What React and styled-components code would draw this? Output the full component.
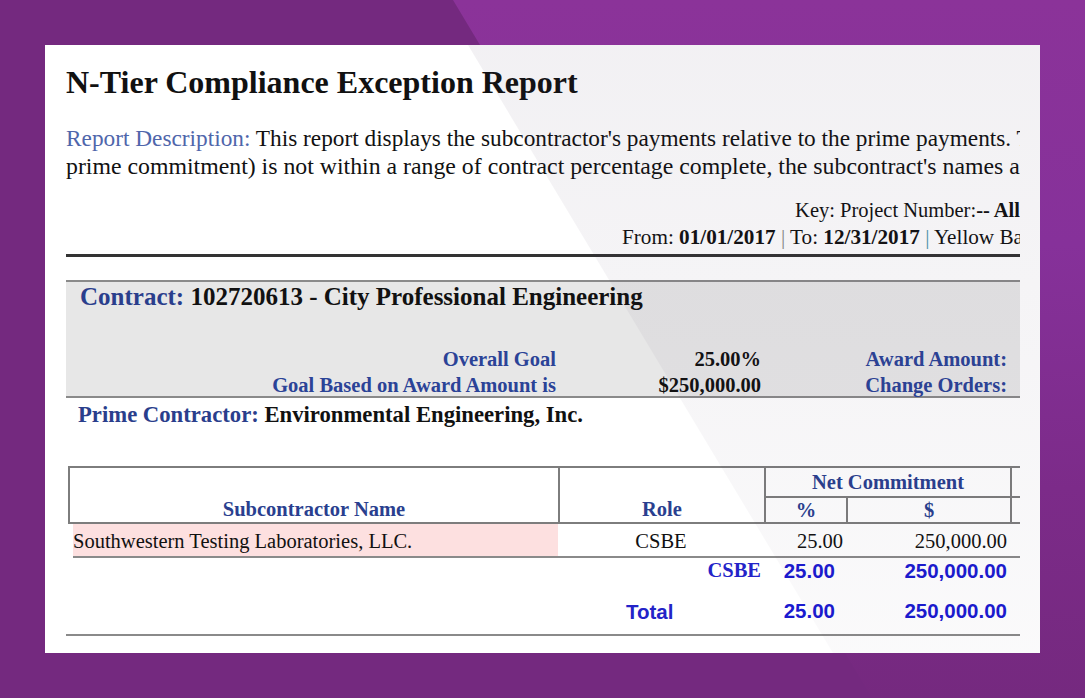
import React from 'react';
import styled, { createGlobalStyle } from 'styled-components';

const GlobalStyle = createGlobalStyle`
  html, body { margin: 0; padding: 0; }
  body { font-family: "Liberation Serif", "Times New Roman", serif; }
`;

function App() {
  return (
    <Page>
      <GlobalStyle />
      <Card>
        <Inner>
          <Title>N-Tier Compliance Exception Report</Title>

          <Description>
            <Line>
              <Label>Report Description:</Label> This report displays the subcontractor's payments relative to the prime payments. The subcontractor's payment percentage (relative to the
            </Line>
            <Line $wide>
              prime commitment) is not within a range of contract percentage complete, the subcontract's names are color coded below.
            </Line>
          </Description>

          <KeyBlock>
            <KeyLine>Key: Project Number:<b>-- All</b></KeyLine>
            <KeyLine $cut>
              From: <b>01/01/2017</b> <Sep>|</Sep> To: <b>12/31/2017</b> <Sep $teal>|</Sep> Yellow Ba<Rest>nd: 10%</Rest>
            </KeyLine>
          </KeyBlock>

          <ThickRule />

          <ContractBox>
            <ContractTitle>
              <Label $dark>Contract:</Label> 102720613 - City Professional Engineering
            </ContractTitle>
            <GoalGrid>
              <GoalLabel>Overall Goal</GoalLabel>
              <GoalValue>25.00%</GoalValue>
              <GoalLabel>Award Amount:</GoalLabel>
              <GoalLabel>Goal Based on Award Amount is</GoalLabel>
              <GoalValue>$250,000.00</GoalValue>
              <GoalLabel>Change Orders:</GoalLabel>
            </GoalGrid>
          </ContractBox>

          <Prime>
            <Label $dark>Prime Contractor:</Label> Environmental Engineering, Inc.
          </Prime>

          <HeadTable>
            <colgroup>
              <col style={{ width: 490 }} />
              <col style={{ width: 206 }} />
              <col style={{ width: 82 }} />
              <col style={{ width: 164 }} />
              <col style={{ width: 82 }} />
              <col style={{ width: 164 }} />
            </colgroup>
            <thead>
              <tr>
                <Th rowSpan={2} $bottom>Subcontractor Name</Th>
                <Th rowSpan={2} $bottom>Role</Th>
                <Th colSpan={2} $group>Net Commitment</Th>
                <Th colSpan={2} $group>Paid To Date</Th>
              </tr>
              <tr>
                <Th>%</Th>
                <Th>$</Th>
                <Th>%</Th>
                <Th>$</Th>
              </tr>
            </thead>
          </HeadTable>

          <BodyTable>
            <colgroup>
              <col style={{ width: 485 }} />
              <col style={{ width: 206 }} />
              <col style={{ width: 82 }} />
              <col style={{ width: 164 }} />
              <col style={{ width: 200 }} />
            </colgroup>
            <tbody>
              <DataRow>
                <NameCell>Southwestern Testing Laboratories, LLC.</NameCell>
                <Td $align="center">CSBE</Td>
                <Td $align="right">25.00</Td>
                <Td $align="right">250,000.00</Td>
                <Td />
              </DataRow>
              <SumRow>
                <td />
                <SumLabel $align="right">CSBE</SumLabel>
                <SumNum $pad={11}>25.00</SumNum>
                <SumNum $pad={3}>250,000.00</SumNum>
                <td />
              </SumRow>
              <SumRow $total>
                <td />
                <SumLabel $sans>Total</SumLabel>
                <SumNum $pad={11}>25.00</SumNum>
                <SumNum $pad={3}>250,000.00</SumNum>
                <td />
              </SumRow>
            </tbody>
          </BodyTable>

          <BottomRule />
        </Inner>
      </Card>
    </Page>
  );
}

export default App;

const Page = styled.div`
  position: relative;
  width: 1085px;
  height: 698px;
  box-sizing: border-box;
  padding: 45px;
  background: #74297f;
  overflow: hidden;

  &:before {
    content: "";
    position: absolute;
    top: 0;
    left: 0;
    right: 0;
    bottom: 0;
    background: linear-gradient(to bottom, #8b3399 0%, #86319a 35%, #7c2b89 70%, #75297f 100%);
    clip-path: polygon(453px 0, 100% 0, 100% 100%, 872px 100%);
  }
`;

const Card = styled.div`
  position: relative;
  z-index: 1;
  width: 995px;
  height: 608px;
  box-sizing: border-box;
  padding: 19px 20px 0 21px;
  background: #ffffff;

  &:after {
    content: "";
    position: absolute;
    top: 0;
    left: 0;
    right: 0;
    bottom: 0;
    pointer-events: none;
    background: linear-gradient(to bottom, rgba(60, 40, 80, 0.065) 0%, rgba(60, 40, 80, 0.045) 60%, rgba(60, 40, 80, 0.025) 100%);
    clip-path: polygon(423px 0, 100% 0, 100% 100%, 788px 100%);
  }
`;

const Inner = styled.div`
  width: 954px;
  overflow: hidden;
  color: #111;
`;

const Title = styled.h1`
  margin: 0;
  font-size: 32px;
  line-height: 36px;
  font-weight: bold;
  white-space: nowrap;
`;

const Description = styled.div`
  margin-top: 24px;
  font-size: 23.3px;
  line-height: 28px;
`;

const Line = styled.div`
  white-space: nowrap;
  font-size: ${p => (p.$wide ? '23.8px' : 'inherit')};
`;

const Label = styled.span`
  color: ${p => (p.$dark ? '#2a3e8c' : '#4f66ab')};
  font-weight: ${p => (p.$dark ? 'bold' : 'normal')};
`;

const KeyBlock = styled.div`
  margin-top: 17px;
  font-size: 20.5px;
  line-height: 27px;
  text-align: right;
`;

const KeyLine = styled.div`
  white-space: nowrap;
  font-size: ${p => (p.$cut ? '21.2px' : 'inherit')};
  margin-right: ${p => (p.$cut ? '-3px' : '0')};
`;

const Sep = styled.span`
  color: ${p => (p.$teal ? '#4f97ad' : '#888888')};
`;

const Rest = styled.span`
  display: inline-block;
  width: 0;
  overflow: visible;
  white-space: nowrap;
`;

const ThickRule = styled.div`
  margin-top: 3px;
  height: 3px;
  background: #333;
`;

const ContractBox = styled.div`
  margin-top: 23px;
  border-top: 2px solid #8a8a8a;
  border-bottom: 2px solid #8a8a8a;
  background: #e7e7e7;
  padding-top: 2px;
`;

const ContractTitle = styled.div`
  padding-left: 14px;
  font-size: 25px;
  line-height: 26px;
  font-weight: bold;
  white-space: nowrap;
`;

const GoalGrid = styled.div`
  display: grid;
  grid-template-columns: 490px 205px 246px;
  grid-auto-rows: 26px;
  margin-top: 36px;
  margin-bottom: -2px;
  font-size: 20.5px;
  font-weight: bold;
  line-height: 26px;
`;

const GoalLabel = styled.div`
  color: #2b4397;
  text-align: right;
  white-space: nowrap;
`;

const GoalValue = styled.div`
  color: #111;
  text-align: right;
`;

const Prime = styled.div`
  padding-left: 12px;
  margin-top: 4px;
  font-size: 22.7px;
  line-height: 26px;
  font-weight: bold;
  white-space: nowrap;
`;

const HeadTable = styled.table`
  margin: 38px 0 0 2px;
  border-collapse: collapse;
  table-layout: fixed;
  width: 1188px;
`;

const Th = styled.th`
  border: 2px solid #7d7d7d;
  color: #2a3f8f;
  font-size: 20.5px;
  font-weight: bold;
  padding: 0;
  text-align: center;
  vertical-align: ${p => (p.$bottom ? 'bottom' : 'middle')};
  height: ${p => (p.$group ? '28px' : '24px')};
  line-height: 22px;
  padding-bottom: ${p => (p.$bottom ? '2px' : '0')};
  white-space: nowrap;
`;

const BodyTable = styled.table`
  margin-left: 7px;
  border-collapse: collapse;
  table-layout: fixed;
  width: 1137px;
`;

const DataRow = styled.tr`
  td {
    border-bottom: 2px solid #8a8a8a;
    height: 31px;
    padding-top: 1px;
  }
`;

const Td = styled.td`
  padding: 0 3px;
  font-size: 20.5px;
  line-height: 24px;
  text-align: ${p => p.$align || 'left'};
  white-space: nowrap;
`;

const NameCell = styled(Td)`
  background: #fde0e0;
  padding-left: 0;
`;

const SumRow = styled.tr`
  td {
    height: ${p => (p.$total ? '40px' : '22px')};
    vertical-align: ${p => (p.$total ? 'bottom' : 'top')};
    padding-top: ${p => (p.$total ? '0' : '1px')};
    padding-bottom: ${p => (p.$total ? '6px' : '0')};
  }
`;

const SumLabel = styled.td`
  color: #2323c8;
  font-family: ${p => (p.$sans ? '"Liberation Sans", Arial, sans-serif' : 'inherit')};
  font-size: 20.5px;
  font-weight: bold;
  line-height: 22px;
  text-align: ${p => p.$align || 'left'};
  padding-left: ${p => (p.$align ? '0' : '68px')};
  padding-right: 3px;
  white-space: nowrap;
`;

const SumNum = styled.td`
  color: #1a1ad0;
  font-family: "Liberation Sans", Arial, sans-serif;
  font-size: 20.5px;
  font-weight: bold;
  line-height: 24px;
  text-align: right;
  padding-right: ${p => p.$pad}px;
  white-space: nowrap;
`;

const BottomRule = styled.div`
  margin-top: 5px;
  height: 2px;
  background: #8a8a8a;
`;
